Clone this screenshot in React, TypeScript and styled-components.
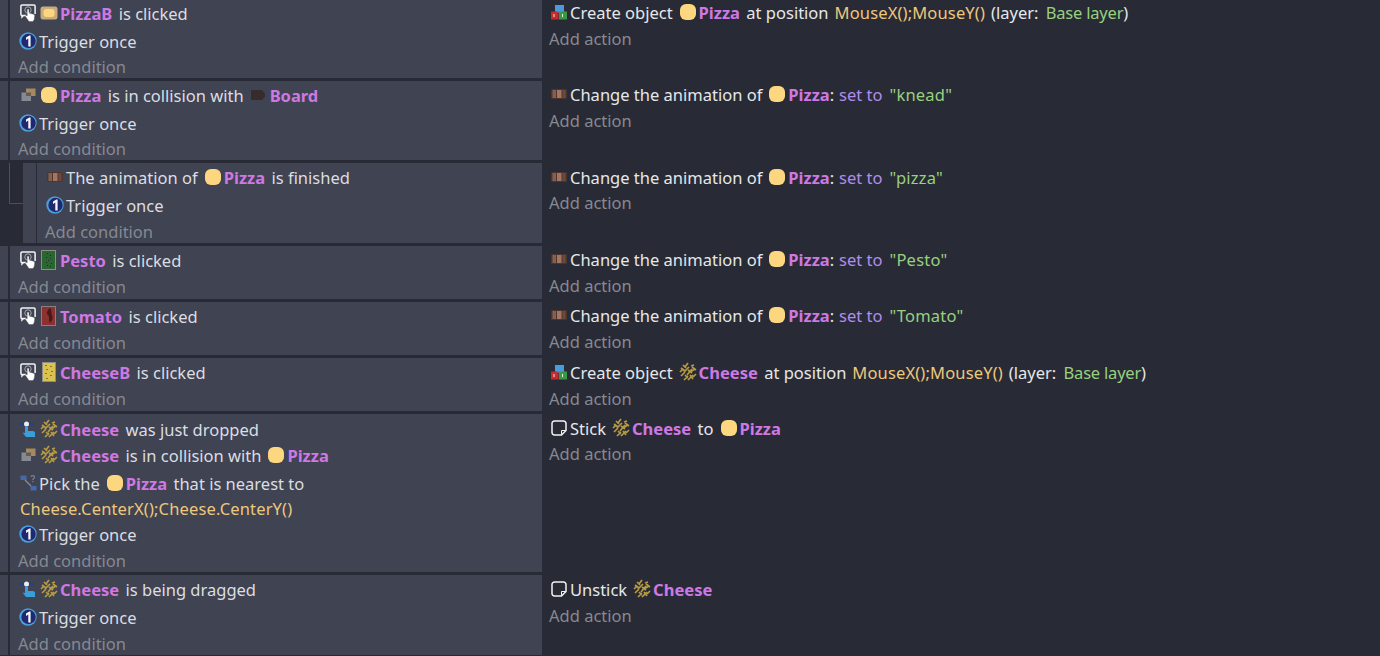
import React from 'react';
import styled, {createGlobalStyle} from 'styled-components';

const GlobalStyle = createGlobalStyle`
  html, body {
    margin: 0;
    padding: 0;
    height: 656px;
    overflow: hidden;
    background: #282b35;
  }
`;

const Sheet = styled.div`
  width: 1380px;
  height: 656px;
  overflow: hidden;
  display: flex;
  flex-direction: column;
  font-family: "Noto Sans", "Open Sans", sans-serif;
  font-size: 16.5px;
  color: #dcdde1;
  background: #282b35;
`;

const EventRow = styled.div<{ h: number }>`
  flex: none;
  height: ${(p) => p.h}px;
  display: grid;
  grid-template-columns: 542px 1fr;
  grid-template-rows: ${(p) => p.h}px;
  overflow: hidden;
`;

const ConditionSide = styled.div<{ nested?: boolean, last?: boolean }>`
  display: flex;
  box-sizing: border-box;
  background: #282b35;
  border-bottom: ${(p) => p.last ? 1 : 3}px solid #282b35;
  padding-left: ${(p) => p.nested ? 23 : 0}px;
  position: relative;
`;

const Strip = styled.div<{ nested?: boolean }>`
  flex: none;
  width: ${(p) => p.nested ? 13 : 8}px;
  background: #3f4352;
  margin-right: ${(p) => p.nested ? 1 : 2}px;
`;

const Conditions = styled.div<{ shift: number }>`
  flex: 1;
  background: #3f4352;
  padding: ${(p) => p.shift}px 0 0 8px;
`;

const Actions = styled.div<{ shift: number }>`
  padding: ${(p) => p.shift}px 0 0 7px;
  color: #e6e7ea;
`;

const Line = styled.div<{ h?: number }>`
  height: ${(p) => p.h ?? 26}px;
  padding-top: ${(p) => Math.max((p.h ?? 26) - 26, 0)}px;
  box-sizing: border-box;
  white-space: nowrap;
  display: flex;
  align-items: center;
`;

const AddLink = styled.div<{ mt: number }>`
  height: 22px;
  line-height: 22px;
  margin-top: ${(p) => p.mt}px;
  color: #868992;
`;

const Obj = styled.span<{ tight?: boolean }>`
  color: #ce78e3;
  font-weight: 700;
  margin-right: ${(p) => p.tight ? 0 : 6.4}px;
`;

const Expr = styled.span<{ ml?: number }>`
  color: #eec77c;
  white-space: pre;
  letter-spacing: 0.15px;
  margin-left: ${(p) => p.ml ?? 0}px;
`;

const Str = styled.span`
  color: #98d07f;
  letter-spacing: 0.2px;
  margin-left: 7px;
`;

const LayerName = styled.span`
  color: #98d07f;
  letter-spacing: -0.2px;
  margin-left: 3px;
`;

const Op = styled.span`
  color: #b28cec;
  margin-left: 5px;
`;

const Txt = styled.span<{ ml?: number }>`
  white-space: pre;
  margin-left: ${(p) => p.ml ?? 0}px;
`;

const Glyph = styled.svg<{ ml?: number, gap?: number, soft?: boolean }>`
  flex: none;
  margin-left: ${(p) => p.ml ?? 0}px;
  margin-right: ${(p) => p.gap ?? 2}px;
  filter: ${(p) => p.soft ? 'blur(0.4px)' : 'none'};
`;

const TreeLine = styled.div`
  position: absolute;
  left: 9px;
  top: 0;
  width: 13px;
  height: 40px;
  border-left: 1px solid #4b4f5d;
  border-bottom: 1px solid #4b4f5d;
`;

const ClickIcon = () => (
  <Glyph width="17" height="18" viewBox="0 0 17 18" ml={2} gap={3}>
    <path d="M6 11.500H3.500L2 13V11.500A1.200 1.200 0 0 1 .9 10.300V2.200A1.200 1.200 0 0 1 2.100 1H13.900A1.200 1.200 0 0 1 15.100 2.200V10" fill="none" stroke="#f4f4f4" strokeWidth="1.500"/>
    <circle cx="8" cy="6" r="3.200" fill="none" stroke="#a4a8b2" strokeWidth="1"/>
    <path d="M7.200 5.500a1 1 0 0 1 1.800 0V9l4.500 1.200c.8.200 1.300.8 1.200 1.600l-.5 3.700L13 17.500H9L5.500 12.500c-.5-.8.400-1.500 1.100-1l.6.600z" fill="#fff" stroke="#555" strokeWidth=".4"/>
  </Glyph>
);

const OneIcon = () => (
  <Glyph width="18" height="18" viewBox="0 0 18 18" ml={1} gap={2}>
    <circle cx="9" cy="9" r="8.700" fill="#4b9fdc"/>
    <circle cx="9.500" cy="9" r="7.200" fill="#20296f"/>
    <path d="M7 5.600 10.300 3.500h1.300v11H9.300V6.500L7 7.900z" fill="#f6f7fb"/>
  </Glyph>
);

const CollisionIcon = () => (
  <Glyph width="15" height="14" viewBox="0 0 15 14" ml={3} gap={4}>
    <rect x="5" y="0.500" width="9.500" height="7.500" fill="#a5895f"/>
    <rect x="0.500" y="4.500" width="9.500" height="8.500" fill="#868a93"/>
    <rect x="5" y="4.500" width="5" height="3.500" fill="#6a5c4a"/>
  </Glyph>
);

const PizzaIcon = ({ml}: { ml?: number }) => (
  <Glyph width="18" height="18" viewBox="0 0 18 18" ml={ml} gap={2} soft>
    <rect x="1" y="1" width="16" height="16" rx="6" fill="#fdd680"/>
  </Glyph>
);

const PizzaBIcon = () => (
  <Glyph width="18" height="16" viewBox="0 0 18 16" gap={2} soft>
    <rect x="0.500" y="1.500" width="17" height="13" rx="2.500" fill="#c9ab7c"/>
    <rect x="3.500" y="4" width="11" height="8" rx="3" fill="#fdd680"/>
  </Glyph>
);

const BoardIcon = () => (
  <Glyph width="16" height="12" viewBox="0 0 16 12" ml={6} gap={4} soft>
    <path d="M1 1h11l3 3.500v3L12 11H1z" fill="#372c2c"/>
  </Glyph>
);

const AnimIcon = () => (
  <Glyph width="16" height="12" viewBox="0 0 16 12" ml={2} gap={3} soft>
    <rect x="0" y="1" width="16" height="10" rx="1.500" fill="#4d3630"/>
    <rect x="1.500" y="2" width="3.500" height="8" fill="#86604f"/>
    <rect x="6" y="2" width="4.500" height="8" fill="#a47560"/>
    <rect x="11.500" y="2" width="3" height="8" fill="#6a4a3f"/>
  </Glyph>
);

const PestoIcon = () => (
  <Glyph width="16" height="20" viewBox="0 0 16 20" ml={1} gap={3}>
    <rect x="0.500" y="0.500" width="14" height="19" fill="#2b6532" stroke="#8a8f88"/>
    <path d="M6 3h1v1H6zm3 2h1v1H9zM5 7h1v1H5zm4 1h1v1H9zM7 10h1v1H7zm-2 2h1v1H5zm5 1h1v1h-1zm-4 2h1v1H6zm3 1h1v1H9z" fill="#0f3416"/>
  </Glyph>
);

const TomatoIcon = () => (
  <Glyph width="15" height="20" viewBox="0 0 15 20" ml={1} gap={4}>
    <rect x="0.500" y="0.500" width="14" height="19" fill="#8c3030" stroke="#8a7f7f"/>
    <path d="M9 2C6 5 5 7 7 9s0 5 2 8c3-3 3-6 2-8s0-5-2-7z" fill="#471a1a"/>
  </Glyph>
);

const CheeseBIcon = () => (
  <Glyph width="14" height="20" viewBox="0 0 14 20" ml={2} gap={4}>
    <rect x="0.500" y="0.500" width="13" height="19" fill="#d9c24f" stroke="#8d8f86"/>
    <path d="M3 3h2v1H3zm5 1h2v1H8zM4 7h2v1H4zm5 2h2v1H9zm-6 2h2v1H3zm5 2h2v1H8zm-4 3h2v1H4z" fill="#8a7322"/>
  </Glyph>
);

const CheeseIcon = ({ml}: { ml?: number }) => (
  <Glyph width="18" height="20" viewBox="0 0 18 20" ml={ml} gap={2}>
    <path d="M1 10l3-3M2 14l4-4M5 18l4-4M6 5l3-4M5 10l5-5M8 13l5-6M9 18l5-5M12 4l3-1M11 10l5-3M14 15l3-3M4 3l3 3M11 13l3 4M2 6l4 3M9 8l4 3M13 5l4 3M6 13l3 3"
      stroke="#b79a44" strokeWidth="1.700" fill="none"/>
  </Glyph>
);

const DragIcon = () => (
  <Glyph width="16" height="17" viewBox="0 0 16 17" ml={2} gap={4}>
    <path d="M0 3h3.500M9.500 3H14" stroke="#2c3a86" strokeWidth="2"/>
    <circle cx="6.500" cy="3" r="2.500" fill="#e4edf8"/>
    <path d="M5 5.500h3v4.500h5l2 1v5H6L2.500 11.500l2.500.5z" fill="#3a9ed8"/>
  </Glyph>
);

const PickIcon = () => (
  <Glyph width="17" height="16" viewBox="0 0 17 16" ml={2} gap={2}>
    <rect x="0.500" y="0.500" width="6" height="4.500" fill="#4668a8"/>
    <rect x="10.500" y="11" width="6" height="4.500" fill="#4668a8"/>
    <path d="M5 5l6 6" stroke="#8a8f9a" strokeWidth="1.300"/>
    <path d="M11 2c0-1.800 3.500-1.800 3.500 0 0 1.500-1.700 1.500-1.700 3M12.800 6v1.200" stroke="#7c808c" strokeWidth="1.200" fill="none"/>
  </Glyph>
);

const CreateIcon = () => (
  <Glyph width="16" height="15" viewBox="0 0 16 15" ml={2} gap={3} soft>
    <rect x="4" y="0" width="9" height="8" fill="#4a9ade"/>
    <rect x="0" y="6.500" width="7.500" height="8" fill="#c92a2c"/>
    <rect x="8" y="6.500" width="8" height="8" fill="#389a45"/>
    <path d="M3 9v3M11.500 9v3" stroke="#e8e8e8" strokeWidth="1"/>
  </Glyph>
);

const StickIcon = () => (
  <Glyph width="16" height="16" viewBox="0 0 16 16" ml={2} gap={3}>
    <path d="M3.500 1H12.500A2.500 2.500 0 0 1 15 3.500V10.500L10.500 15H3.500A2.500 2.500 0 0 1 1 12.500V3.500A2.500 2.500 0 0 1 3.500 1z" fill="none" stroke="#f4f4f4" strokeWidth="1.500"/>
    <path d="M14.500 10.500h-4v4" fill="none" stroke="#f4f4f4" strokeWidth="1"/>
  </Glyph>
);

const Add = ({mt = 3}: { mt?: number }) => <AddLink mt={mt}>Add condition</AddLink>;
const AddAct = ({mt = 4}: { mt?: number }) => <AddLink mt={mt}>Add action</AddLink>;
const Trigger = ({h = 28}: { h?: number }) => <Line h={h}><OneIcon/><Txt>Trigger once</Txt></Line>;

type RowType = {
  h: number
  nested?: boolean
  last?: boolean
  top: number
  topAct: number
  left: React.ReactNode
  right: React.ReactNode
}

const Row = ({h, nested, last, top, topAct, left, right}: RowType) => (
  <EventRow h={h}>
    <ConditionSide nested={nested} last={last}>
      {nested && <TreeLine/>}
      <Strip nested={nested}/>
      <Conditions shift={top}>{left}</Conditions>
    </ConditionSide>
    <Actions shift={topAct}>{right}</Actions>
  </EventRow>
);

const ChangeAnim = ({value}: { value: string }) => (
  <Line h={24}>
    <AnimIcon/><Txt>Change the animation of</Txt><PizzaIcon ml={6}/><Obj tight>Pizza</Obj>
    <Txt>:</Txt><Op>set to</Op><Str>"{value}"</Str>
  </Line>
);

const CreateAt = ({icon, name}: { icon: React.ReactNode, name: string }) => (
  <Line h={24}>
    <CreateIcon/><Txt>Create object</Txt>{icon}<Obj>{name}</Obj><Txt>at position</Txt>
    <Expr ml={6}>MouseX();MouseY()</Expr><Txt ml={6}>(layer: </Txt><LayerName>Base layer</LayerName><Txt>)</Txt>
  </Line>
);

export default function App() {
  return (
    <Sheet>
      <GlobalStyle/>
      <Row h={81} top={0} topAct={0}
           left={<>
             <Line><ClickIcon/><PizzaBIcon/><Obj>PizzaB</Obj><Txt>is clicked</Txt></Line>
             <Trigger/>
             <Add mt={2}/>
           </>}
           right={<>
             <CreateAt icon={<PizzaIcon ml={6}/>} name="Pizza"/>
             <AddAct/>
           </>}/>
      <Row h={82} top={1} topAct={1}
           left={<>
             <Line><CollisionIcon/><PizzaIcon/><Obj>Pizza</Obj><Txt>is in collision with</Txt><BoardIcon/><Obj>Board</Obj></Line>
             <Trigger/>
             <Add mt={2}/>
           </>}
           right={<>
             <ChangeAnim value="knead"/>
             <AddAct/>
           </>}/>
      <Row h={83} nested top={1} topAct={2}
           left={<>
             <Line><AnimIcon/><Txt>The animation of</Txt><PizzaIcon ml={6}/><Obj>Pizza</Obj><Txt>is finished</Txt></Line>
             <Trigger/>
             <Add/>
           </>}
           right={<>
             <ChangeAnim value="pizza"/>
             <AddAct mt={3}/>
           </>}/>
      <Row h={56} top={1} topAct={1}
           left={<>
             <Line><ClickIcon/><PestoIcon/><Obj>Pesto</Obj><Txt>is clicked</Txt></Line>
             <Add/>
           </>}
           right={<>
             <ChangeAnim value="Pesto"/>
             <AddAct/>
           </>}/>
      <Row h={56} top={1} topAct={1}
           left={<>
             <Line><ClickIcon/><TomatoIcon/><Obj>Tomato</Obj><Txt>is clicked</Txt></Line>
             <Add/>
           </>}
           right={<>
             <ChangeAnim value="Tomato"/>
             <AddAct/>
           </>}/>
      <Row h={56} top={1} topAct={2}
           left={<>
             <Line><ClickIcon/><CheeseBIcon/><Obj>CheeseB</Obj><Txt>is clicked</Txt></Line>
             <Add/>
           </>}
           right={<>
             <CreateAt icon={<CheeseIcon ml={6}/>} name="Cheese"/>
             <AddAct/>
           </>}/>
      <Row h={161} top={2} topAct={1}
           left={<>
             <Line><DragIcon/><CheeseIcon/><Obj>Cheese</Obj><Txt>was just dropped</Txt></Line>
             <Line><CollisionIcon/><CheeseIcon/><Obj>Cheese</Obj><Txt>is in collision with</Txt><PizzaIcon ml={6}/><Obj>Pizza</Obj></Line>
             <Line h={28}><PickIcon/><Txt>Pick the</Txt><PizzaIcon ml={6}/><Obj>Pizza</Obj><Txt>that is nearest to</Txt></Line>
             <Line h={25}><Expr ml={2}>Cheese.CenterX();Cheese.CenterY()</Expr></Line>
             <Trigger h={26}/>
             <Add/>
           </>}
           right={<>
             <Line><StickIcon/><Txt>Stick</Txt><CheeseIcon ml={6}/><Obj>Cheese</Obj><Txt>to</Txt><PizzaIcon ml={6}/><Obj>Pizza</Obj></Line>
             <AddAct mt={2}/>
           </>}/>
      <Row h={81} last top={1} topAct={2}
           left={<>
             <Line><DragIcon/><CheeseIcon/><Obj>Cheese</Obj><Txt>is being dragged</Txt></Line>
             <Trigger/>
             <Add/>
           </>}
           right={<>
             <Line h={24}><StickIcon/><Txt>Unstick</Txt><CheeseIcon ml={6}/><Obj>Cheese</Obj></Line>
             <AddAct/>
           </>}/>
    </Sheet>
  );
}
